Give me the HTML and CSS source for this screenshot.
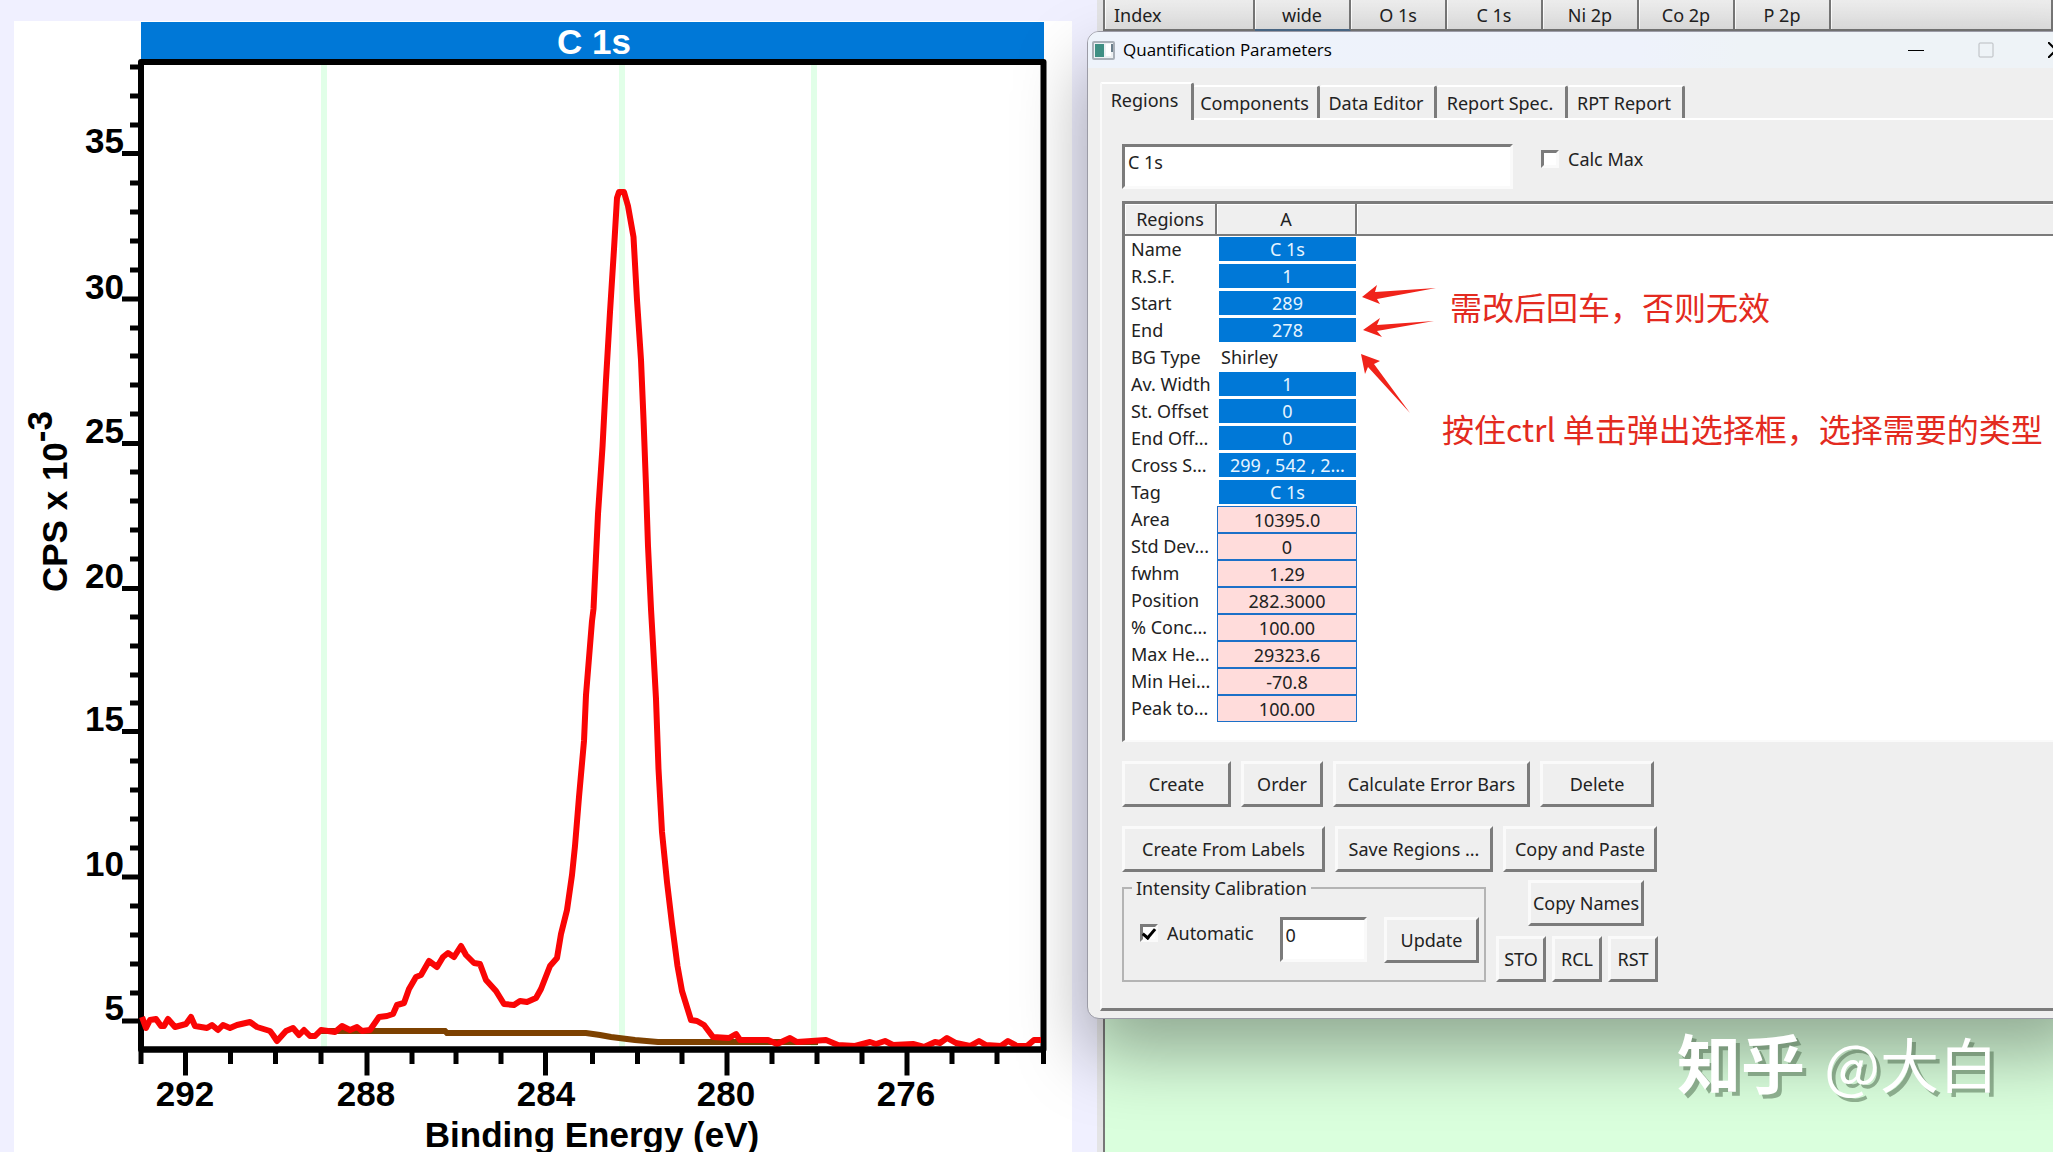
FILE: index.html
```html
<!DOCTYPE html>
<html lang="zh-CN">
<head>
<meta charset="utf-8">
<title>Quantification Parameters</title>
<link rel="stylesheet" href="styles.css">
</head>
<body>
<main class="workspace">
  <section class="plot">
    <svg class="spectrum" viewBox="14 21 1058 1131" role="img" aria-label="C 1s spectrum">
      <rect x="141" y="22" width="903" height="40" fill="#0078d7"/>
      <g class="marker">
        <path d="M324 64V1047M622 64V1047M814 64V1047"/>
      </g>
      <path class="background" d="M321 1031L445 1031L447 1033L586 1033L600 1035L611 1037L635 1040L658 1042L818 1042"/>
      <path class="axis-frame" d="M141 62H1043.5V1049.500H141Z"/>
      <path class="tick" d="M130 67h11M130 96h11M130 125h11M122 153.500h19M130 183h11M130 212h11M130 241h11M130 270h11M122 299h19M130 328h11M130 356h11M130 385h11M130 414h11M122 443.500h19M130 472h11M130 501h11M130 530h11M130 559h11M122 588.500h19M130 617h11M130 646h11M130 675h11M130 703h11M122 731.500h19M130 761h11M130 790h11M130 819h11M130 848h11M122 877h19M130 906h11M130 935h11M130 964h11M130 993h11M122 1021h19"/>
      <path class="tick" d="M141 1050v14M185.500 1050v25.500M230.500 1050v14M275.500 1050v14M321 1050v14M367 1050v25.500M412 1050v14M456 1050v14M501 1050v14M545.500 1050v25.500M592.500 1050v14M637.500 1050v14M682 1050v14M727 1050v25.500M772 1050v14M817 1050v14M862 1050v14M907 1050v25.500M952 1050v14M997 1050v14M1043.500 1050v14"/>
      <path class="signal" d="M142 1017L146 1028L150 1020L156 1019L161 1026L164 1026L168 1019L175 1027L186 1024L191 1017L195 1026L207 1028L212 1025L218 1030L223 1025L230 1028L237 1025L250 1022L257 1027L270 1031L273 1035L277 1041L286 1031L293 1028L299 1035L304 1030L310 1036L315 1036L321 1030L335 1032L342 1026L350 1030L357 1027L362 1031L370 1030L379 1017L387 1016L393 1014L397 1005L404 1003L409 989L416 977L421 975L429 961L437 967L443 957L448 953L454 957L461 946L466 955L474 963L480 964L486 980L496 991L504 1004L514 1005L520 1001L527 1002L536 998L541 989L550 966L557 958L561 934L567 910L572 875L575 846L579 797L584 741L586 695L592 621L593.500 609L598 514L602.500 447L606 380L610 312L614 249L617 198L619 192L624 192L628 206L633.500 237L637 300L641 360L643.500 419L646 486L648 546L651 609L652.500 635L656 699L658.500 769L662 832L667 882L672 924L677.500 966L682 991L691 1020L697 1021L704 1025L713 1037L729 1038L736 1034L740 1040L768 1040L777 1044L790 1038L797 1042L826 1040L838 1045L855 1046L870 1042L876 1044L885 1041L893 1045L913 1044L924 1047L935 1042L940 1043L947 1038L956 1043L970 1046L979 1041L986 1045L1001 1046L1008 1041L1017 1046L1027 1046L1034 1040L1041 1040"/>
      <path class="axis-frame" d="M141 1049.500H1046"/>
      <g class="chart-text">
        <text class="chart-title" x="594" y="54">C 1s</text>
        <g class="y-labels">
          <text x="124" y="153">35</text>
          <text x="124" y="299">30</text>
          <text x="124" y="443">25</text>
          <text x="124" y="588">20</text>
          <text x="124" y="731">15</text>
          <text x="124" y="876">10</text>
          <text x="124" y="1020">5</text>
        </g>
        <g class="x-labels">
          <text x="185" y="1106">292</text>
          <text x="366" y="1106">288</text>
          <text x="546" y="1106">284</text>
          <text x="726" y="1106">280</text>
          <text x="906" y="1106">276</text>
          <text x="592" y="1147">Binding Energy (eV)</text>
        </g>
        <text transform="translate(67 592) rotate(-90)">CPS x 10<tspan dy="-15">-3</tspan></text>
      </g>
    </svg>
  </section>

  <section class="sheet-area">
    <div class="sheet">
      <table class="sheet-head">
        <thead>
          <tr><th class="index-col">Index</th><th class="current">wide</th><th>O 1s</th><th>C 1s</th><th>Ni 2p</th><th>Co 2p</th><th>P 2p</th><th class="rest"></th></tr>
        </thead>
      </table>
    </div>

    <section class="dialog" role="dialog" aria-labelledby="dialog-title">
      <header class="titlebar">
        <svg class="app-icon" width="23" height="19" viewBox="0 0 23 19" aria-hidden="true">
          <rect x="1" y="1" width="21" height="17" rx="1" fill="#edf1f3" stroke="#a9b0b8" stroke-width="2"/>
          <rect x="3" y="3" width="9" height="13" fill="#3f8f83"/>
          <rect x="14" y="3" width="5" height="12" fill="#fff"/>
          <rect x="19" y="3" width="2" height="8" fill="#6b7f8c"/>
        </svg>
        <h1 id="dialog-title">Quantification Parameters</h1>
        <div class="window-controls">
          <button type="button" aria-label="Minimize"><svg width="16" height="16"><path d="M0 8.500h16" stroke="#000" fill="none"/></svg></button>
          <button type="button" aria-label="Maximize" disabled><svg width="16" height="16"><rect x="1" y="1" width="14" height="14" rx="1" stroke="#b9bcc0" fill="none"/></svg></button>
          <button type="button" aria-label="Close"><svg width="16" height="16"><path d="M0 0L16 16M16 0L0 16" stroke="#000" stroke-width="2" fill="none"/></svg></button>
        </div>
      </header>

      <div class="tabs" role="tablist">
        <button type="button" role="tab" class="tab active" aria-selected="true">Regions</button>
        <button type="button" role="tab" class="tab components">Components</button>
        <button type="button" role="tab" class="tab">Data Editor</button>
        <button type="button" role="tab" class="tab report">Report Spec.</button>
        <button type="button" role="tab" class="tab">RPT Report</button>
      </div>

      <div class="panel">
        <div class="name-row">
          <input class="field name-field" type="text" value="C 1s" aria-label="Region name">
          <label class="check"><input type="checkbox">Calc Max</label>
        </div>

        <div class="region-list">
          <table class="regions">
            <thead><tr><th class="label-col">Regions</th><th class="value-col">A</th><th></th></tr></thead>
            <tbody>
              <tr><th>Name</th><td class="edit">C 1s</td></tr>
              <tr><th>R.S.F.</th><td class="edit">1</td></tr>
              <tr><th>Start</th><td class="edit">289</td></tr>
              <tr><th>End</th><td class="edit">278</td></tr>
              <tr><th>BG Type</th><td class="choice">Shirley</td></tr>
              <tr><th>Av. Width</th><td class="edit">1</td></tr>
              <tr><th>St. Offset</th><td class="edit">0</td></tr>
              <tr><th>End Off...</th><td class="edit">0</td></tr>
              <tr><th>Cross S...</th><td class="edit">299 , 542 , 2...</td></tr>
              <tr><th>Tag</th><td class="edit">C 1s</td></tr>
              <tr><th>Area</th><td class="result">10395.0</td></tr>
              <tr><th>Std Dev...</th><td class="result">0</td></tr>
              <tr><th>fwhm</th><td class="result">1.29</td></tr>
              <tr><th>Position</th><td class="result">282.3000</td></tr>
              <tr><th>% Conc...</th><td class="result">100.00</td></tr>
              <tr><th>Max He...</th><td class="result">29323.6</td></tr>
              <tr><th>Min Hei...</th><td class="result">-70.8</td></tr>
              <tr><th>Peak to...</th><td class="result">100.00</td></tr>
            </tbody>
          </table>
          <svg class="arrows" width="80" height="134" viewBox="1360 282 80 134" aria-hidden="true">
            <path d="M1363 297L1378 285L1376 292L1437 288L1378 299L1381 304Z"/>
            <path d="M1364 330L1381 318L1378 325L1435 321L1378 331L1383 337Z"/>
            <path d="M1362 354L1381 361L1375 364L1411 413L1369 367L1366 374Z"/>
          </svg>
          <p class="note note-enter">需改后回车，否则无效</p>
          <p class="note note-type">按住ctrl 单击弹出选择框，选择需要的类型</p>
        </div>

        <div class="actions">
          <button type="button" class="btn w-create">Create</button>
          <button type="button" class="btn w-order">Order</button>
          <button type="button" class="btn w-error">Calculate Error Bars</button>
          <button type="button" class="btn w-delete">Delete</button>
        </div>
        <div class="actions">
          <button type="button" class="btn w-labels">Create From Labels</button>
          <button type="button" class="btn w-save">Save Regions ...</button>
          <button type="button" class="btn w-paste">Copy and Paste</button>
        </div>
        <div class="bottom-row">
          <fieldset class="calibration">
            <legend>Intensity Calibration</legend>
            <div class="calibration-row">
              <label class="check"><input type="checkbox" checked>Automatic</label>
              <input class="field amount" type="text" value="0" aria-label="Calibration value">
              <button type="button" class="btn w-update">Update</button>
            </div>
          </fieldset>
          <div class="memory">
            <button type="button" class="btn w-names">Copy Names</button>
            <div class="memory-row">
              <button type="button" class="btn">STO</button>
              <button type="button" class="btn">RCL</button>
              <button type="button" class="btn">RST</button>
            </div>
          </div>
        </div>
      </div>
    </section>

    <p class="watermark"><strong>知乎</strong> <span>@大白</span></p>
  </section>
</main>
</body>
</html>
```
FILE: styles.css
```css
* {
  box-sizing: border-box;
}

body {
  margin: 0;
  background: #f0f0ff;
  color: #222;
  font: 18px/24px "Noto Sans", "Noto Sans CJK SC", sans-serif;
  overflow: hidden;
}

button,
input {
  font: inherit;
  color: inherit;
}

.workspace {
  display: grid;
  grid-template-columns: minmax(0, 1097fr) minmax(0, 956fr);
  min-height: 100vh;
}

/* Spectrum */
.plot {
  padding: 21px 25px 0 14px;
}

.spectrum {
  display: block;
  width: 100%;
  height: auto;
  background: #fff;
}

.spectrum path {
  fill: none;
}

.marker path {
  stroke: #e1ffe8;
  stroke-width: 6;
}

.axis-frame {
  stroke: #000;
  stroke-width: 6;
  stroke-linejoin: round;
}

.tick {
  stroke: #000;
  stroke-width: 5;
}

.background {
  stroke: #7d4100;
  stroke-width: 6;
}

.signal {
  stroke: #fa0505;
  stroke-width: 6;
  stroke-linejoin: round;
}

.chart-text {
  font: bold 35px "Liberation Sans", sans-serif;
  fill: #000;
}

.chart-title {
  fill: #fff;
  text-anchor: middle;
}

.y-labels {
  text-anchor: end;
}

.x-labels {
  text-anchor: middle;
}

/* Sample sheet behind the dialog */
.sheet-area {
  position: relative;
  padding-left: 6px;
  background: #e4e4e6;
}

.sheet {
  height: 100%;
  border-left: 2px solid #777;
  background: #daffdd;
}

.sheet-head {
  width: 100%;
  table-layout: fixed;
  border-spacing: 0;
}

.sheet-head th {
  width: 96px;
  height: 31px;
  padding: 0;
  border-right: 2px solid #777;
  border-bottom: 2px solid #777;
  background: linear-gradient(#eee, #e2e2e2);
  box-shadow: inset 1px 0 #fff;
  font-weight: 400;
}

.sheet-head .index-col {
  width: 150px;
  padding-left: 9px;
  text-align: left;
}

.sheet-head .current {
  border-bottom-color: #4c6b8a;
}

.sheet-head .rest {
  width: auto;
}

/* Dialog */
.dialog {
  position: absolute;
  top: 31px;
  left: -10px;
  right: -39px;
  padding-bottom: 7px;
  border: 1px solid #9b9ba6;
  border-radius: 12px;
  background: #efefef;
  box-shadow: 0 34px 70px rgba(0, 0, 0, 0.34);
}

.titlebar {
  display: flex;
  align-items: center;
  gap: 8px;
  height: 36px;
  padding-left: 4px;
  border-radius: 11px 11px 0 0;
  background: linear-gradient(90deg, #eef3fb, #eef2fb 55%, #eef3f7 65%);
}

.titlebar h1 {
  margin: 0;
  color: #000;
  font: 17px/24px "Open Sans", sans-serif;
}

.window-controls {
  display: flex;
  margin-left: auto;
}

.window-controls button {
  display: grid;
  place-items: center;
  width: 70px;
  height: 36px;
  padding: 0;
  border: 0;
  background: none;
}

.tabs {
  display: flex;
  align-items: flex-end;
  padding: 14px 0 0 12px;
}

.tab {
  width: 117px;
  height: 33px;
  padding: 0 2px 0 0;
  border: 0;
  border-top: 2px solid #fff;
  border-right: 3px solid #7b7b7b;
  border-radius: 2px 3px 0 0;
  background: #efefef;
  white-space: nowrap;
}

.tab.active {
  width: 94px;
  height: 38px;
  margin-bottom: -2px;
  padding: 0 4px 4px 0;
  border-left: 2px solid #fafafa;
}

.tab.components {
  width: 126px;
}

.tab.report {
  width: 131px;
}

.panel {
  margin-left: 12px;
  padding: 24px 0 26px 20px;
  border-top: 2px solid #fff;
  border-left: 2px solid #fafafa;
  border-bottom: 3px solid #7b7b7b;
}

.name-row {
  display: flex;
  align-items: flex-start;
  gap: 28px;
}

.name-row .check {
  padding-top: 3px;
}

.field {
  height: 45px;
  padding: 0 3px 9px;
  border: 3px solid;
  border-color: #7b7b7b #fafafa #fafafa #7b7b7b;
  border-radius: 0;
  background: #fff;
}

.name-field {
  width: 391px;
}

.check {
  display: flex;
  align-items: center;
  gap: 9px;
}

.check input {
  appearance: none;
  display: grid;
  place-items: center;
  width: 18px;
  height: 18px;
  margin: 0;
  border: 3px solid;
  border-color: #7b7b7b #fafafa #fafafa #7b7b7b;
  background: #fff;
}

.check input:checked::before {
  content: "";
  width: 5px;
  height: 10px;
  border: solid #000;
  border-width: 0 3px 3px 0;
  transform: translateY(-1px) rotate(40deg);
}

/* Region list */
.region-list {
  position: relative;
  height: 541px;
  margin: 12px 0 19px;
  border-top: 3px solid #7b7b7b;
  border-left: 3px solid #7b7b7b;
  border-bottom: 2px solid #fafafa;
  background: #fff;
}

.regions {
  width: 100%;
  table-layout: fixed;
  border-spacing: 0;
}

.regions th,
.regions td {
  padding: 0;
  font-weight: 400;
  white-space: nowrap;
}

.regions thead th {
  height: 32px;
  border-right: 2px solid #7b7b7b;
  border-bottom: 2px solid #7b7b7b;
  background: #efefef;
  box-shadow: inset 1px 1px #fff;
}

.regions .label-col {
  width: 92px;
}

.regions .value-col {
  width: 140px;
}

.regions tbody th,
.regions tbody td {
  height: 27px;
  line-height: 24px;
}

.regions tbody th {
  padding: 0 0 2px 6px;
  text-align: left;
}

.regions td {
  text-align: center;
}

.regions .edit {
  border: solid #fff;
  border-width: 1px 1px 2px 2px;
  background: #0078d7;
  color: #e6f4ff;
}

.regions .choice {
  padding: 0 0 2px 4px;
  text-align: left;
}

.regions .result {
  border: 1px solid #1c70c8;
  background: #ffdcdb;
}

.arrows {
  position: absolute;
  left: 234px;
  top: 78px;
  fill: #f0231a;
}

.note {
  position: absolute;
  margin: 0;
  color: #e32a20;
  font: 32px/40px "Noto Sans CJK SC", sans-serif;
  white-space: nowrap;
}

.note-enter {
  left: 325px;
  top: 82px;
}

.note-type {
  left: 317px;
  top: 204px;
}

/* Buttons */
.btn {
  height: 46px;
  padding: 0;
  border: 3px solid;
  border-color: #fafafa #7b7b7b #7b7b7b #fafafa;
  background: #efefef;
  white-space: nowrap;
}

.actions {
  display: flex;
  gap: 10px;
  margin-bottom: 19px;
}

.actions + .actions {
  margin-bottom: 8px;
}

.w-create { width: 109px; }
.w-order { width: 82px; }
.w-error { width: 197px; }
.w-delete { width: 114px; }
.w-labels { width: 203px; }
.w-save { width: 158px; }
.w-paste { width: 154px; }
.w-update { width: 95px; }
.w-names { width: 116px; }

.bottom-row {
  display: flex;
  align-items: flex-start;
  gap: 10px;
}

.calibration {
  width: 364px;
  height: 106px;
  margin: -4px 0 0;
  padding: 17px 5px 0 16px;
  border: 2px solid #b4b4b4;
}

.calibration legend {
  margin-left: -8px;
  padding: 0 4px;
}

.calibration-row {
  display: flex;
  align-items: flex-start;
  justify-content: space-between;
}

.calibration-row .check {
  width: 122px;
  padding-top: 4px;
}

.amount {
  width: 87px;
}

.memory {
  display: flex;
  flex-direction: column;
  gap: 10px;
}

.memory .w-names {
  align-self: flex-end;
  margin-right: 14px;
}

.memory-row {
  display: flex;
  gap: 6px;
}

.memory-row .btn {
  width: 50px;
}

.watermark {
  position: absolute;
  right: 55px;
  bottom: 49px;
  margin: 0;
  color: #fff;
  font: 59px/80px "Noto Sans CJK SC", sans-serif;
  text-shadow: 4px 4px rgba(70, 100, 70, 0.5);
  white-space: nowrap;
}

.watermark strong {
  margin-right: 6px;
  font-size: 64px;
  font-weight: 700;
}
```
